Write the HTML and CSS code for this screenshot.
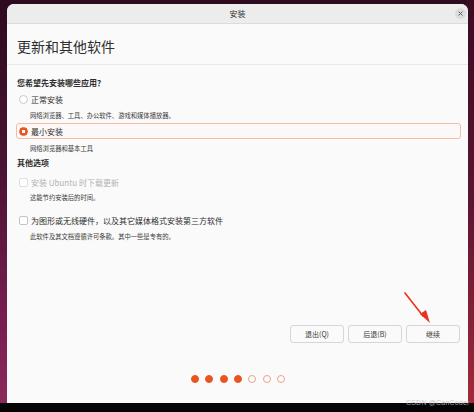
FILE: index.html
```html
<!DOCTYPE html>
<html lang="zh">
<head>
<meta charset="utf-8">
<link rel="stylesheet" href="styles.css">
</head>
<body>
<div class="desktop">
  <div class="window">
    <div class="titlebar">
      <span class="title">安装</span>
      <span class="close">
        <svg width="5" height="5" viewBox="0 0 5 5"><path d="M0.5 0.5L4.5 4.5M4.5 0.5L0.5 4.5" stroke="#555" stroke-width="0.9"/></svg>
      </span>
    </div>
    <div class="header">更新和其他软件</div>
    <div class="content">
      <div class="label q1">您希望先安装哪些应用？</div>
      <div class="opt radio-row r1"><span class="radio"></span><span>正常安装</span></div>
      <div class="sub s1"><span class="subtext">网络浏览器、工具、办公软件、游戏和媒体播放器。</span></div>
      <div class="opt radio-row selected"><span class="radio on"></span><span>最小安装</span></div>
      <div class="sub s2"><span class="subtext">网络浏览器和基本工具</span></div>
      <div class="label q2">其他选项</div>
      <div class="opt check-row disabled c1"><span class="check"></span><span>安装 Ubuntu 时下载更新</span></div>
      <div class="sub s3"><span class="subtext">这能节约安装后的时间。</span></div>
      <div class="opt check-row c2"><span class="check"></span><span>为图形或无线硬件，以及其它媒体格式安装第三方软件</span></div>
      <div class="sub s4"><span class="subtext">此软件及其文档遵循许可条款。其中一些是专有的。</span></div>
      <div class="buttons">
        <button class="btn">退出(Q)</button>
        <button class="btn">后退(B)</button>
        <button class="btn">继续</button>
      </div>
      <div class="dots">
        <span class="dot full"></span><span class="dot full"></span><span class="dot full"></span><span class="dot full"></span><span class="dot"></span><span class="dot"></span><span class="dot"></span>
      </div>
    </div>
  </div>
  <div class="bottombar"></div>
  <svg class="arrow" width="40" height="40" viewBox="0 0 40 40">
    <path d="M1 1L19 24" stroke="#e8321f" stroke-width="1.6" stroke-linecap="round"/>
    <path d="M16 22L26 31L22 18Z" fill="#e8321f"/>
  </svg>
  <div class="watermark">CSDN @CanCoder</div>
</div>
</body>
</html>
```
FILE: styles.css
```css
html, body {
  margin: 0;
  padding: 0;
}
body {
  width: 474px;
  height: 412px;
  overflow: hidden;
  font-family: "Noto Sans CJK SC", "Noto Sans", sans-serif;
  color: #2e2e2e;
}
.desktop {
  position: relative;
  width: 474px;
  height: 412px;
  display: flex;
  flex-direction: column;
  background: linear-gradient(to bottom, #2e0a1f 0%, #4a1232 40%, #7a1e52 80%, #8e2a5c 100%);
}
.desktop::after {
  content: "";
  position: absolute;
  right: 0;
  top: 0;
  width: 8px;
  height: 404px;
  background: linear-gradient(to bottom, #3a0c24 0%, #5c1430 50%, #a32a3c 100%);
}
.window {
  margin: 4px 0 0 7px;
  width: 461px;
  height: 399px;
  background: #fafafa;
  border-radius: 7px 7px 0 0;
  display: flex;
  flex-direction: column;
  overflow: hidden;
  position: relative;
  z-index: 1;
}
.titlebar {
  height: 19px;
  background: #ececec;
  border-bottom: 1px solid #dcdcdc;
  display: flex;
  align-items: center;
  justify-content: center;
  position: relative;
}
.title {
  font-size: 8px;
  color: #2e2e2e;
  line-height: 1;
}
.close {
  position: absolute;
  right: 2px;
  top: 4px;
  width: 11px;
  height: 11px;
  border-radius: 50%;
  background: #dcdcdc;
  display: flex;
  align-items: center;
  justify-content: center;
}
.header {
  height: 40px;
  border-bottom: 1px solid #e8e8e8;
  padding-left: 10px;
  font-size: 14px;
  line-height: 44px;
  color: #2e2e2e;
}
.content {
  display: flex;
  flex-direction: column;
  padding: 12px 7px 0 9px;
}
.label {
  height: 12px;
  line-height: 12px;
  font-size: 8px;
  font-weight: bold;
  padding-left: 1px;
  color: #2e2e2e;
}
.opt {
  box-sizing: border-box;
  height: 14px;
  display: flex;
  align-items: center;
  font-size: 8px;
  gap: 3px;
  padding-left: 2px;
  border: 1px solid transparent;
  border-radius: 3px;
  color: #2e2e2e;
}
.r1 { margin-top: 3px; }
.selected {
  height: 16px;
  margin-top: 2px;
  border-color: #f3bda8;
  background: #fcf8f7;
}
.radio {
  width: 7px;
  height: 7px;
  border: 1px solid #c8c8c8;
  border-radius: 50%;
  background: #fff;
  box-sizing: content-box;
}
.radio.on {
  border-color: #e95420;
  background: radial-gradient(circle, #fff 0 1.6px, #e95420 2px);
}
.check {
  width: 7px;
  height: 7px;
  border: 1px solid #c4c4c4;
  border-radius: 2px;
  background: #fff;
}
.disabled { color: #b3b3b3; }
.disabled .check { border-color: #dedede; }
.c1 { margin-top: 6px; }
.c2 { margin-top: 10px; }
.sub {
  height: 10px;
  line-height: 10px;
  font-size: 6.3px;
  color: #3c3c3c;
  display: flex;
}
.subtext {
  margin-left: 14px;
}
.s1 { margin-top: 5px; }
.s2 { margin-top: 5px; }
.s3 { margin-top: 4px; }
.s4 { margin-top: 5px; }
.q2 { margin-top: 3px; }
.buttons {
  margin-top: 83px;
  display: flex;
  justify-content: flex-end;
  gap: 4px;
  padding-right: 1px;
}
.btn {
  width: 54px;
  height: 18px;
  border: 1px solid #d6d6d6;
  border-radius: 3px;
  background: #fafafa;
  font-family: "Noto Sans CJK SC", "Noto Sans", sans-serif;
  font-size: 7px;
  color: #3a3a3a;
  padding: 0;
}
.dots {
  margin-top: 32px;
  display: flex;
  justify-content: center;
  gap: 6.3px;
  padding-right: 1px;
}
.dot {
  width: 8px;
  height: 8px;
  border-radius: 50%;
  box-sizing: border-box;
  border: 1px solid #e5a68d;
  background: #fafafa;
}
.dot.full {
  background: #e95420;
  border-color: #e95420;
}
.bottombar {
  height: 9px;
  background: #050505;
  position: relative;
  z-index: 1;
}
.arrow {
  position: absolute;
  left: 404px;
  top: 292px;
  z-index: 2;
}
.watermark {
  position: absolute;
  left: 406px;
  top: 399px;
  font-family: "Liberation Sans", sans-serif;
  font-size: 7px;
  color: rgba(190, 190, 190, 0.85);
  z-index: 2;
  letter-spacing: 0.2px;
}
```
